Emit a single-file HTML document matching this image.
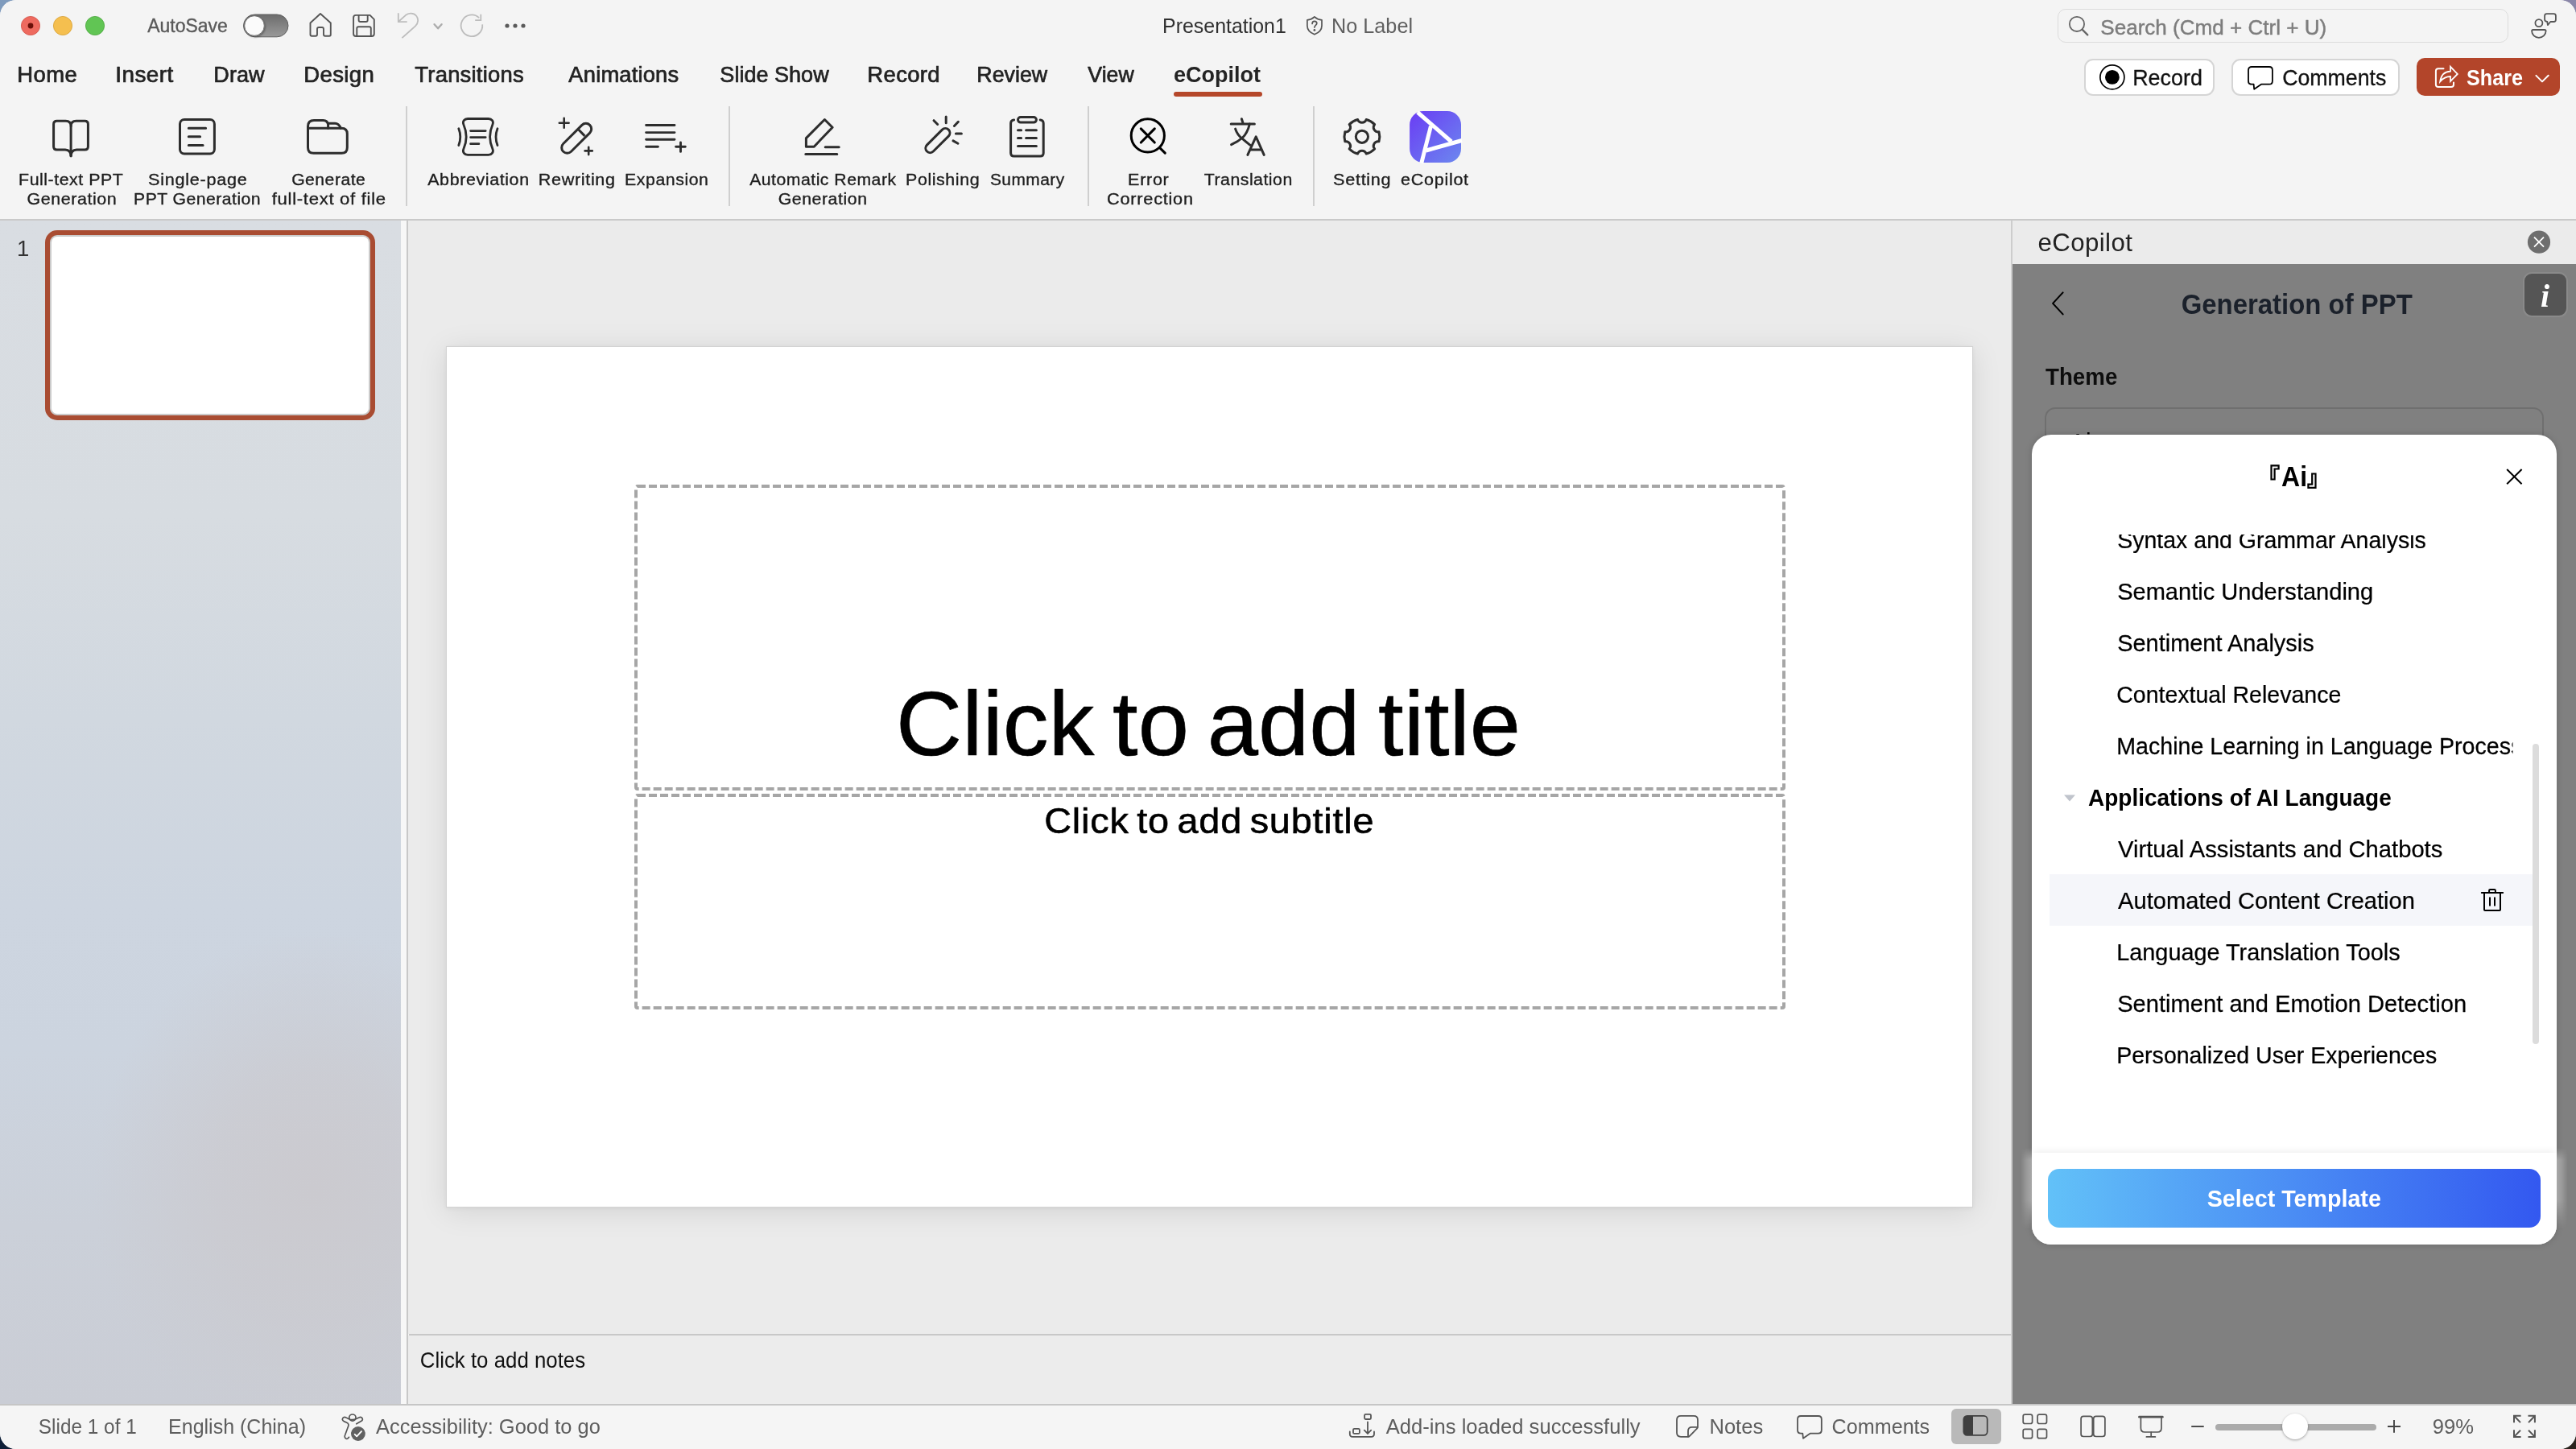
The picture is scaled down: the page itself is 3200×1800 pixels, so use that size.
<!DOCTYPE html>
<html><head><meta charset="utf-8"><title>PowerPoint eCopilot</title>
<style>
html,body{margin:0;padding:0;}
body{width:3200px;height:1800px;position:relative;overflow:hidden;font-family:"Liberation Sans",sans-serif;background:#f4f4f4}
svg text{font-family:"Liberation Sans",sans-serif;white-space:pre}
</style></head><body>
<div style="position:absolute;left:0px;top:0px;width:40px;height:40px;background:#7f9bbd"></div><div style="position:absolute;left:3160px;top:0px;width:40px;height:40px;background:#8a86a8"></div><div style="position:absolute;left:0px;top:1760px;width:40px;height:40px;background:#0e1f38"></div><div style="position:absolute;left:3160px;top:1760px;width:40px;height:40px;background:#2a231d"></div>
<div style="position:absolute;left:0;top:0;width:3200px;height:1800px;border-radius:20px;overflow:hidden;background:#f4f4f4">
<div style="position:absolute;left:0px;top:0px;width:3200px;height:272px;background:#f4f4f4"></div><div style="position:absolute;left:0px;top:272px;width:3200px;height:2px;background:#c9c9c9"></div><div style="position:absolute;left:0px;top:274px;width:498px;height:1470px;background:radial-gradient(ellipse 55% 22% at 78% 82%,rgba(203,202,207,1) 0%,rgba(203,202,207,0.7) 45%,rgba(203,202,207,0) 100%),linear-gradient(180deg,#d9dde2 0%,#d7dce1 25%,#d1d8e0 42%,#cdd5e0 58%,#ccd4df 70%,#cbd0d9 85%,#cacdd5 100%)"></div><div style="position:absolute;left:498px;top:274px;width:7px;height:1470px;background:#f7f7f7"></div><div style="position:absolute;left:505px;top:274px;width:2px;height:1470px;background:#c8c8c8"></div><div style="position:absolute;left:56px;top:286px;width:410px;height:236px;box-sizing:border-box;border:6px solid #a94c32;border-radius:15px;background:#a94c32"></div><div style="position:absolute;left:62px;top:292px;width:398px;height:224px;box-sizing:border-box;border:2px solid #cbcbcb;border-radius:9px;background:#fff"></div><div style="position:absolute;left:507px;top:274px;width:1991px;height:1383px;background:#ebebeb"></div><div style="position:absolute;left:508px;top:1657px;width:1990px;height:2px;background:#c8c8c8"></div><div style="position:absolute;left:507px;top:1659px;width:1991px;height:85px;background:#ececec"></div><div style="position:absolute;left:554px;top:430px;width:1897px;height:1070px;box-sizing:border-box;background:#fff;border:1.6px solid #d3d3d3;box-shadow:0 5px 34px rgba(0,0,0,0.10),0 1px 6px rgba(0,0,0,0.05)"></div><div style="position:absolute;left:2498px;top:274px;width:2px;height:1470px;background:#cdcdcd"></div><div style="position:absolute;left:2500px;top:274px;width:700px;height:54px;background:#ebebeb"></div><div style="position:absolute;left:2500px;top:328px;width:700px;height:1416px;background:#808080"></div><div style="position:absolute;left:0px;top:1744px;width:3200px;height:2px;background:#c6c6c6"></div><div style="position:absolute;left:0px;top:1746px;width:3200px;height:54px;background:#f5f5f5"></div><div style="position:absolute;left:2556px;top:11px;width:560px;height:42px;box-sizing:border-box;border:1.5px solid #dcdcdc;border-radius:10px;background:#f4f4f4"></div><div style="position:absolute;left:2589px;top:73px;width:162px;height:46px;box-sizing:border-box;border:2px solid #d5d5d5;border-radius:11px;background:#fff"></div><div style="position:absolute;left:2772px;top:73px;width:209px;height:46px;box-sizing:border-box;border:2px solid #d5d5d5;border-radius:11px;background:#fff"></div><div style="position:absolute;left:3002px;top:72px;width:178px;height:47px;border-radius:10px;background:#b3452a"></div><div style="position:absolute;left:1458px;top:114px;width:110px;height:6px;border-radius:3px;background:#b5472a"></div><div style="position:absolute;left:504px;top:132px;width:1.5px;height:124px;background:#cfcfcf"></div><div style="position:absolute;left:905px;top:132px;width:1.5px;height:124px;background:#cfcfcf"></div><div style="position:absolute;left:1351px;top:132px;width:1.5px;height:124px;background:#cfcfcf"></div><div style="position:absolute;left:1631px;top:132px;width:1.5px;height:124px;background:#cfcfcf"></div><div style="position:absolute;left:3134px;top:338px;width:56px;height:56px;box-sizing:border-box;border:2px solid #8a8a8a;border-radius:11px;background:#555"></div><div style="position:absolute;left:2540px;top:506px;width:620px;height:120px;box-sizing:border-box;border:2px solid #6f6f6f;border-radius:13px"></div><div style="position:absolute;left:2424px;top:1750px;width:62px;height:44px;border-radius:6px;background:#b9b9b9"></div><div style="position:absolute;left:2752px;top:1769px;width:200px;height:8px;border-radius:4px;background:#ababab"></div><div style="position:absolute;left:2835px;top:1756px;width:32px;height:32px;border-radius:50%;background:#fff;box-shadow:0 1px 3px rgba(0,0,0,0.35)"></div>
<svg width="3200" height="1800" viewBox="0 0 3200 1800" style="position:absolute;left:0;top:0;will-change:transform">
<text x="0" y="0" transform="translate(183.19 40.40) scale(0.9668 1)" style="font-size:23.75px;font-weight:normal;letter-spacing:0.000px;fill:#5a5a5a;stroke:#5a5a5a;stroke-width:0.4px;stroke-linejoin:round" >AutoSave</text><text x="0" y="0" transform="translate(1444.10 41.00) scale(0.9497 1)" style="font-size:26.25px;font-weight:normal;letter-spacing:0.000px;fill:#303030" >Presentation1</text><text x="0" y="0" transform="translate(1654.08 41.00) scale(0.9608 1)" style="font-size:26.25px;font-weight:normal;letter-spacing:0.000px;fill:#5f5f5f" >No Label</text><text x="0" y="0" transform="translate(2609.25 42.70) scale(0.9842 1)" style="font-size:26.5px;font-weight:normal;letter-spacing:0.000px;fill:#7d7d7d;stroke:#7d7d7d;stroke-width:0.45px;stroke-linejoin:round" >Search (Cmd + Ctrl + U)</text><text x="0" y="0" transform="translate(21.32 102.00) scale(1.0165 1)" style="font-size:27.0px;font-weight:normal;letter-spacing:0.377px;fill:#232323;stroke:#232323;stroke-width:0.7px;stroke-linejoin:round" >Home</text><text x="0" y="0" transform="translate(143.30 102.00) scale(1.0327 1)" style="font-size:27.0px;font-weight:normal;letter-spacing:0.416px;fill:#232323;stroke:#232323;stroke-width:0.7px;stroke-linejoin:round" >Insert</text><text x="0" y="0" transform="translate(265.35 102.00) scale(1.0024 1)" style="font-size:27.0px;font-weight:normal;letter-spacing:0.050px;fill:#232323;stroke:#232323;stroke-width:0.7px;stroke-linejoin:round" >Draw</text><text x="0" y="0" transform="translate(377.32 102.00) scale(1.0204 1)" style="font-size:27.0px;font-weight:normal;letter-spacing:0.323px;fill:#232323;stroke:#232323;stroke-width:0.7px;stroke-linejoin:round" >Design</text><text x="0" y="0" transform="translate(515.34 102.00) scale(1.0166 1)" style="font-size:27.0px;font-weight:normal;letter-spacing:0.211px;fill:#232323;stroke:#232323;stroke-width:0.7px;stroke-linejoin:round" >Transitions</text><text x="0" y="0" transform="translate(706.35 102.00) scale(1.0123 1)" style="font-size:27.0px;font-weight:normal;letter-spacing:0.181px;fill:#232323;stroke:#232323;stroke-width:0.7px;stroke-linejoin:round" >Animations</text><text x="0" y="0" transform="translate(894.35 102.00) scale(1.0011 1)" style="font-size:27.0px;font-weight:normal;letter-spacing:0.017px;fill:#232323;stroke:#232323;stroke-width:0.7px;stroke-linejoin:round" >Slide Show</text><text x="0" y="0" transform="translate(1077.32 102.00) scale(1.0197 1)" style="font-size:27.0px;font-weight:normal;letter-spacing:0.324px;fill:#232323;stroke:#232323;stroke-width:0.7px;stroke-linejoin:round" >Record</text><text x="0" y="0" transform="translate(1213.36 102.00) scale(0.9920 1)" style="font-size:27.0px;font-weight:normal;letter-spacing:0.000px;fill:#232323;stroke:#232323;stroke-width:0.7px;stroke-linejoin:round" >Review</text><text x="0" y="0" transform="translate(1351.35 102.00) scale(0.9881 1)" style="font-size:27.0px;font-weight:normal;letter-spacing:0.000px;fill:#232323;stroke:#232323;stroke-width:0.7px;stroke-linejoin:round" >View</text><text x="1458.00" y="102.00" style="font-size:27.0px;font-weight:bold;letter-spacing:0.000px;fill:#232323" >eCopilot</text><text x="0" y="0" transform="translate(2649.16 106.00) scale(0.9964 1)" style="font-size:27.0px;font-weight:normal;letter-spacing:0.000px;fill:#111;stroke:#111;stroke-width:0.3px;stroke-linejoin:round" >Record</text><text x="0" y="0" transform="translate(2835.16 106.00) scale(0.9899 1)" style="font-size:27.0px;font-weight:normal;letter-spacing:0.000px;fill:#111;stroke:#111;stroke-width:0.3px;stroke-linejoin:round" >Comments</text><text x="0" y="0" transform="translate(3064.07 106.00) scale(0.9315 1)" style="font-size:27.0px;font-weight:bold;letter-spacing:0.000px;fill:#fff" >Share</text><text x="0" y="0" transform="translate(23.07 230.00) scale(1.0548 1)" style="font-size:20.25px;font-weight:normal;letter-spacing:0.500px;fill:#1e1e1e;stroke:#1e1e1e;stroke-width:0.35px;stroke-linejoin:round" >Full-text PPT</text><text x="0" y="0" transform="translate(33.43 254.00) scale(1.0562 1)" style="font-size:20.25px;font-weight:normal;letter-spacing:0.581px;fill:#1e1e1e;stroke:#1e1e1e;stroke-width:0.35px;stroke-linejoin:round" >Generation</text><text x="0" y="0" transform="translate(184.12 230.00) scale(1.0689 1)" style="font-size:20.25px;font-weight:normal;letter-spacing:0.685px;fill:#1e1e1e;stroke:#1e1e1e;stroke-width:0.35px;stroke-linejoin:round" >Single-page</text><text x="0" y="0" transform="translate(166.09 254.00) scale(1.0444 1)" style="font-size:20.25px;font-weight:normal;letter-spacing:0.466px;fill:#1e1e1e;stroke:#1e1e1e;stroke-width:0.35px;stroke-linejoin:round" >PPT Generation</text><text x="0" y="0" transform="translate(362.14 230.00) scale(1.0435 1)" style="font-size:20.25px;font-weight:normal;letter-spacing:0.496px;fill:#1e1e1e;stroke:#1e1e1e;stroke-width:0.35px;stroke-linejoin:round" >Generate</text><text x="0" y="0" transform="translate(337.69 254.00) scale(1.0928 1)" style="font-size:20.25px;font-weight:normal;letter-spacing:0.633px;fill:#1e1e1e;stroke:#1e1e1e;stroke-width:0.35px;stroke-linejoin:round" >full-text of file</text><text x="0" y="0" transform="translate(531.19 230.00) scale(1.0595 1)" style="font-size:20.25px;font-weight:normal;letter-spacing:0.568px;fill:#1e1e1e;stroke:#1e1e1e;stroke-width:0.35px;stroke-linejoin:round" >Abbreviation</text><text x="0" y="0" transform="translate(668.75 230.00) scale(1.0661 1)" style="font-size:20.25px;font-weight:normal;letter-spacing:0.630px;fill:#1e1e1e;stroke:#1e1e1e;stroke-width:0.35px;stroke-linejoin:round" >Rewriting</text><text x="0" y="0" transform="translate(776.08 230.00) scale(1.0501 1)" style="font-size:20.25px;font-weight:normal;letter-spacing:0.545px;fill:#1e1e1e;stroke:#1e1e1e;stroke-width:0.35px;stroke-linejoin:round" >Expansion</text><text x="0" y="0" transform="translate(931.18 230.00) scale(1.0461 1)" style="font-size:20.25px;font-weight:normal;letter-spacing:0.489px;fill:#1e1e1e;stroke:#1e1e1e;stroke-width:0.35px;stroke-linejoin:round" >Automatic Remark</text><text x="0" y="0" transform="translate(966.63 254.00) scale(1.0516 1)" style="font-size:20.25px;font-weight:normal;letter-spacing:0.536px;fill:#1e1e1e;stroke:#1e1e1e;stroke-width:0.35px;stroke-linejoin:round" >Generation</text><text x="0" y="0" transform="translate(1125.07 230.00) scale(1.0583 1)" style="font-size:20.25px;font-weight:normal;letter-spacing:0.546px;fill:#1e1e1e;stroke:#1e1e1e;stroke-width:0.35px;stroke-linejoin:round" >Polishing</text><text x="0" y="0" transform="translate(1229.95 230.00) scale(1.0327 1)" style="font-size:20.25px;font-weight:normal;letter-spacing:0.456px;fill:#1e1e1e;stroke:#1e1e1e;stroke-width:0.35px;stroke-linejoin:round" >Summary</text><text x="0" y="0" transform="translate(1401.06 230.00) scale(1.0652 1)" style="font-size:20.25px;font-weight:normal;letter-spacing:0.663px;fill:#1e1e1e;stroke:#1e1e1e;stroke-width:0.35px;stroke-linejoin:round" >Error</text><text x="0" y="0" transform="translate(1375.11 254.00) scale(1.0731 1)" style="font-size:20.25px;font-weight:normal;letter-spacing:0.691px;fill:#1e1e1e;stroke:#1e1e1e;stroke-width:0.35px;stroke-linejoin:round" >Correction</text><text x="0" y="0" transform="translate(1495.78 230.00) scale(1.0511 1)" style="font-size:20.25px;font-weight:normal;letter-spacing:0.478px;fill:#1e1e1e;stroke:#1e1e1e;stroke-width:0.35px;stroke-linejoin:round" >Translation</text><text x="0" y="0" transform="translate(1656.12 230.00) scale(1.0681 1)" style="font-size:20.25px;font-weight:normal;letter-spacing:0.651px;fill:#1e1e1e;stroke:#1e1e1e;stroke-width:0.35px;stroke-linejoin:round" >Setting</text><text x="0" y="0" transform="translate(1740.12 230.00) scale(1.0658 1)" style="font-size:20.25px;font-weight:normal;letter-spacing:0.647px;fill:#1e1e1e;stroke:#1e1e1e;stroke-width:0.35px;stroke-linejoin:round" >eCopilot</text><text x="21.00" y="318.00" style="font-size:27.5px;font-weight:normal;letter-spacing:0.000px;fill:#333" >1</text><text x="0" y="0" transform="translate(1113.01 937.80) scale(0.9982 1)" style="font-size:114px;font-weight:normal;letter-spacing:0.000px;fill:#000;word-spacing:-9px;stroke:#000;stroke-width:0.6px;stroke-linejoin:round" >Click to add title</text><text x="0" y="0" transform="translate(1297.23 1035.00) scale(1.0414 1)" style="font-size:45.0px;font-weight:normal;letter-spacing:0.744px;fill:#000;word-spacing:-4px;stroke:#000;stroke-width:0.6px;stroke-linejoin:round" >Click to add subtitle</text><text x="0" y="0" transform="translate(521.79 1699.40) scale(0.9148 1)" style="font-size:28.25px;font-weight:normal;letter-spacing:0.000px;fill:#111" >Click to add notes</text><text x="0" y="0" transform="translate(47.85 1781.20) scale(0.9465 1)" style="font-size:25.75px;font-weight:normal;letter-spacing:0.000px;fill:#5e5e5e" >Slide 1 of 1</text><text x="0" y="0" transform="translate(209.06 1781.20) scale(0.9711 1)" style="font-size:25.75px;font-weight:normal;letter-spacing:0.000px;fill:#5e5e5e" >English (China)</text><text x="0" y="0" transform="translate(467.00 1781.20) scale(0.9893 1)" style="font-size:25.75px;font-weight:normal;letter-spacing:0.000px;fill:#5e5e5e" >Accessibility: Good to go</text><text x="0" y="0" transform="translate(1721.70 1781.20) scale(0.9947 1)" style="font-size:25.75px;font-weight:normal;letter-spacing:0.000px;fill:#5e5e5e" >Add-ins loaded successfully</text><text x="0" y="0" transform="translate(2123.41 1781.20) scale(0.9938 1)" style="font-size:25.75px;font-weight:normal;letter-spacing:0.000px;fill:#5e5e5e" >Notes</text><text x="0" y="0" transform="translate(2275.62 1781.20) scale(0.9772 1)" style="font-size:25.75px;font-weight:normal;letter-spacing:0.000px;fill:#5e5e5e" >Comments</text><text x="0" y="0" transform="translate(3021.71 1781.20) scale(0.9940 1)" style="font-size:25.75px;font-weight:normal;letter-spacing:0.000px;fill:#5e5e5e" >99%</text><text x="0" y="0" transform="translate(2531.48 311.70) scale(1.0248 1)" style="font-size:30.5px;font-weight:normal;letter-spacing:0.383px;fill:#222" >eCopilot</text><text x="0" y="0" transform="translate(2709.68 390.00) scale(0.9209 1)" style="font-size:35.75px;font-weight:bold;letter-spacing:0.000px;fill:#1b212b" >Generation of PPT</text><text x="0" y="0" transform="translate(2541.00 478.00) scale(0.9316 1)" style="font-size:29.75px;font-weight:bold;letter-spacing:0.000px;fill:#0d0d0d" >Theme</text><text x="2571.00" y="559.00" style="font-size:30.0px;font-weight:normal;letter-spacing:0.000px;fill:#000" >Ai</text>
<circle cx="38" cy="32" r="11.6" fill="#ee6a5f" stroke="#d25247" stroke-width="0.8"/>
<circle cx="38" cy="32" r="3.4" fill="#6b1009"/>
<circle cx="78" cy="32" r="11.6" fill="#f5bf4f" stroke="#d6a036" stroke-width="0.8"/>
<circle cx="118" cy="32" r="11.6" fill="#61c554" stroke="#4aa63c" stroke-width="0.8"/>
<defs><linearGradient id="tg" x1="0" y1="0" x2="0" y2="1"><stop offset="0" stop-color="#6c6c6c"/><stop offset="1" stop-color="#9a9a9a"/></linearGradient><linearGradient id="lg" x1="0" y1="0" x2="1" y2="1"><stop offset="0" stop-color="#6a3cf4"/><stop offset="1" stop-color="#6c88ef"/></linearGradient><filter id="ks" x="-50%" y="-50%" width="200%" height="200%"><feDropShadow dx="1" dy="1.5" stdDeviation="1.2" flood-color="#000" flood-opacity="0.35"/></filter></defs>
<rect x="302.5" y="18" width="55.5" height="27.8" rx="13.9" fill="url(#tg)" stroke="#5c5c5c" stroke-width="1"/>
<circle cx="316" cy="32" r="12.3" fill="#fbfbfb" stroke="#6a6a6a" stroke-width="0.9" filter="url(#ks)"/>
<path d="M385.5 43 L385.5 28.5 L398 17 L410.8 28.5 L410.8 43 Q410.8 44.7 409 44.7 L404 44.7 Q402 44.7 402 42.7 L402 36 Q402 34 400 34 L396 34 Q394 34 394 36 L394 42.7 Q394 44.7 392 44.7 L387.3 44.7 Q385.5 44.7 385.5 43 Z" fill="none" stroke="#555" stroke-width="1.9" stroke-linecap="round" stroke-linejoin="round" />
<path d="M442 18.9 L459.6 18.9 L464.8 24.1 L464.8 42 Q464.8 45 461.8 45 L442.1 45 Q439.1 45 439.1 42 L439.1 21.9 Q439.1 18.9 442 18.9 Z" fill="none" stroke="#555" stroke-width="1.9" stroke-linecap="round" stroke-linejoin="round" />
<path d="M445.6 19 L445.6 25 Q445.6 27 447.6 27 L454.7 27 Q456.7 27 456.7 25 L456.7 19" fill="none" stroke="#555" stroke-width="1.9" stroke-linecap="round" stroke-linejoin="round" />
<path d="M443.3 45 L443.3 35.3 Q443.3 33.3 445.3 33.3 L458.8 33.3 Q460.8 33.3 460.8 35.3 L460.8 45" fill="none" stroke="#555" stroke-width="1.9" stroke-linecap="round" stroke-linejoin="round" />
<path d="M494.8 16.3 L494.8 27.1 L505.7 27.1" fill="none" stroke="#bdbdbd" stroke-width="1.8" stroke-linecap="butt" stroke-linejoin="miter" />
<path d="M494.9 27 L504 18.8 C507.5 15.9 513.5 15.6 517 19.5 C520.3 23.2 519.6 29 516 32.3 L499.4 47.2" fill="none" stroke="#bdbdbd" stroke-width="1.8" stroke-linecap="butt" stroke-linejoin="round" />
<path d="M539.6 30.2 L544.1 35.3 L548.6 30.2" fill="none" stroke="#adadad" stroke-width="2.4" stroke-linecap="round" stroke-linejoin="round" />
<path d="M599.2 30.3 A13.3 13.3 0 1 1 595.1 22.1" fill="none" stroke="#bdbdbd" stroke-width="1.8" stroke-linecap="butt" stroke-linejoin="round" />
<path d="M597.3 17.8 L597.3 25.1 L590.2 25.1" fill="none" stroke="#bdbdbd" stroke-width="1.8" stroke-linecap="butt" stroke-linejoin="miter" />
<circle cx="630" cy="32" r="2.6" fill="#5a5a5a"/>
<circle cx="640" cy="32" r="2.6" fill="#5a5a5a"/>
<circle cx="650" cy="32" r="2.6" fill="#5a5a5a"/>
<path d="M1632.9 20.9 C1630.3 23.4 1627.3 24.6 1623.9 24.9 L1623.9 32 C1623.9 37 1627.5 40.6 1632.9 42.8 C1638.3 40.6 1642 37 1642 32 L1642 24.9 C1638.6 24.6 1635.6 23.4 1632.9 20.9 Z" fill="none" stroke="#555" stroke-width="1.7" stroke-linecap="round" stroke-linejoin="round" />
<path d="M1630.1 29.4 C1630.1 27.5 1631.3 26.4 1632.9 26.4 C1634.6 26.4 1635.8 27.6 1635.8 29.1 C1635.8 31.2 1632.9 31.8 1632.9 34.1" fill="none" stroke="#555" stroke-width="1.7" stroke-linecap="round" stroke-linejoin="round" />
<circle cx="1632.9" cy="37.4" r="1.4" fill="#555"/>
<circle cx="2580" cy="29.9" r="9.1" fill="none" stroke="#666" stroke-width="1.8"/>
<path d="M2586.6 36.6 L2593.3 43.4" fill="none" stroke="#666" stroke-width="2.3" stroke-linecap="round" stroke-linejoin="round" />
<circle cx="3153.9" cy="28.6" r="4.5" fill="none" stroke="#555" stroke-width="1.8"/>
<path d="M3145.1 38.6 Q3145.1 37 3146.7 37 L3161 37 Q3162.6 37 3162.6 38.6 C3162.6 43.2 3158.6 46.8 3153.85 46.8 C3149.1 46.8 3145.1 43.2 3145.1 38.6 Z" fill="none" stroke="#555" stroke-width="1.8" stroke-linecap="round" stroke-linejoin="round" />
<path d="M3163.6 17.1 L3172.4 17.1 Q3174.9 17.1 3174.9 19.6 L3174.9 24.5 Q3174.9 27 3172.4 27 L3168.3 27 L3164.9 31.1 L3164.3 27 Q3161.1 26.7 3161.1 24.2 L3161.1 19.6 Q3161.1 17.1 3163.6 17.1 Z" fill="none" stroke="#555" stroke-width="1.8" stroke-linecap="round" stroke-linejoin="round" />
<circle cx="2623.9" cy="95.9" r="15" fill="none" stroke="#000" stroke-width="1.7"/>
<circle cx="2623.9" cy="95.9" r="8.9" fill="#000"/>
<path d="M2797 83 L2818.9 83 Q2822.9 83 2822.9 87 L2822.9 100.7 Q2822.9 104.7 2818.9 104.7 L2809 104.7 L2800.2 110.8 L2799.6 104.7 L2797 104.7 Q2793 104.7 2793 100.7 L2793 87 Q2793 83 2797 83 Z" fill="none" stroke="#000" stroke-width="1.8" stroke-linecap="round" stroke-linejoin="round" />
<path d="M3035.5 85.3 L3028.9 85.3 Q3025.9 85.3 3025.9 88.3 L3025.9 105 Q3025.9 108 3028.9 108 L3045 108 Q3048 108 3048 105 L3048 102.4" fill="none" stroke="#fff" stroke-width="2" stroke-linecap="round" stroke-linejoin="round" />
<path d="M3031.2 101.3 C3032.3 93.5 3037 89 3044 88.7 L3044 82.8 L3052.8 91.9 L3044 101 L3044 95 C3039.2 95 3035 97 3031.2 101.3 Z" fill="none" stroke="#fff" stroke-width="1.8" stroke-linecap="round" stroke-linejoin="miter" />
<path d="M3150.4 93.9 L3158 101.4 L3165.7 93.7" fill="none" stroke="#fff" stroke-width="2" stroke-linecap="round" stroke-linejoin="round" />
<path d="M88.1 156.5 Q88.1 150.3 81.5 150.3 L70.6 150.3 Q66.6 150.3 66.6 154.3 L66.6 182 Q66.6 186 70.6 186 L81 186 Q88.1 186.3 88.1 193.8 Q88.1 186.3 95.2 186 L105.4 186 Q109.4 186 109.4 182 L109.4 154.3 Q109.4 150.3 105.4 150.3 L94.7 150.3 Q88.1 150.3 88.1 156.5 Z" fill="none" stroke="#2d2d2d" stroke-width="3" stroke-linecap="round" stroke-linejoin="round" />
<path d="M88.1 156.5 L88.1 193.8" fill="none" stroke="#2d2d2d" stroke-width="3" stroke-linecap="round" stroke-linejoin="round" />
<rect x="223.5" y="148.5" width="42.9" height="42.6" rx="5.5" fill="none" stroke="#2d2d2d" stroke-width="3"/>
<path d="M234.3 159.2 L255.6 159.2 M234.3 169.8 L248.6 169.8 M234.3 180.6 L252.1 180.6" fill="none" stroke="#2d2d2d" stroke-width="3" stroke-linecap="round" stroke-linejoin="round" />
<path d="M382.5 159.3 L382.5 183.3 Q382.5 190.3 389.5 190.3 L424.3 190.3 Q431.3 190.3 431.3 183.3 L431.3 166.3 Q431.3 159.3 424.3 159.3 Z" fill="none" stroke="#2d2d2d" stroke-width="3" stroke-linecap="round" stroke-linejoin="round" />
<path d="M382.5 160 L382.5 157 Q382.5 149.5 390 149.5 L401.5 149.5 Q406.5 149.5 407.6 154.5 L407.6 159.3" fill="none" stroke="#2d2d2d" stroke-width="3" stroke-linecap="round" stroke-linejoin="round" />
<path d="M407.6 153.3 L416.2 153.3 Q420.8 153.3 423.3 159.3" fill="none" stroke="#2d2d2d" stroke-width="3" stroke-linecap="round" stroke-linejoin="round" />
<path d="M581 147.5 L606.7 147.5 C611 147.5 613.5 151 612 154.5 C609.8 159.5 608.6 165 608.6 169.9 C608.6 174.8 609.8 180.2 612 185.3 C613.5 188.8 611 192.4 606.7 192.4 L581 192.4 C576.8 192.4 574.3 188.8 575.8 185.3 C578 180.2 579.2 174.8 579.2 169.9 C579.2 165 578 159.5 575.8 154.5 C574.3 151 576.8 147.5 581 147.5 Z" fill="none" stroke="#2d2d2d" stroke-width="2.8" stroke-linecap="round" stroke-linejoin="round" />
<path d="M569.8 159.7 Q573.8 169.9 569.8 180.6 M618 159.7 Q614 169.9 618 180.6" fill="none" stroke="#2d2d2d" stroke-width="2.8" stroke-linecap="round" stroke-linejoin="round" />
<path d="M584.6 162.6 L603.2 162.6 M584.6 170.6 L603.2 170.6 M584.6 178.7 L594.9 178.7" fill="none" stroke="#2d2d2d" stroke-width="2.8" stroke-linecap="round" stroke-linejoin="round" />
<rect x="-23.3" y="-6.9" width="46.6" height="13.8" rx="6.9" transform="translate(716.2 171.8) rotate(-45)" fill="none" stroke="#2d2d2d" stroke-width="3"/>
<path d="M718.7 161 L726.4 168.9" fill="none" stroke="#2d2d2d" stroke-width="3" stroke-linecap="butt" stroke-linejoin="round" />
<path d="M694.8 152.8 L706.6 152.8 M700.7 146.9 L700.7 158.8" fill="none" stroke="#2d2d2d" stroke-width="2.6" stroke-linecap="round" stroke-linejoin="round" />
<path d="M726.6 187.4 L735.8 187.4 M731.2 182.8 L731.2 192.1" fill="none" stroke="#2d2d2d" stroke-width="2.6" stroke-linecap="round" stroke-linejoin="round" />
<path d="M802.6 155.5 L838 155.5 M802.6 164.6 L838 164.6 M802.6 173.3 L838 173.3 M802.6 182.2 L817.4 182.2" fill="none" stroke="#2d2d2d" stroke-width="2.9" stroke-linecap="round" stroke-linejoin="round" />
<path d="M839.6 182.2 L851.3 182.2 M845.5 176.9 L845.5 188.4" fill="none" stroke="#2d2d2d" stroke-width="2.9" stroke-linecap="round" stroke-linejoin="round" />
<path d="M1001.4 182.2 L1001.4 171.6 L1024.4 148.5 L1034.1 158.2 L1011.2 182.2 Z" fill="none" stroke="#2d2d2d" stroke-width="3" stroke-linecap="round" stroke-linejoin="round" />
<path d="M1025.2 182.8 L1042.2 182.8 M1000.8 191.5 L1039.8 191.5" fill="none" stroke="#2d2d2d" stroke-width="3" stroke-linecap="round" stroke-linejoin="round" />
<rect x="-19" y="-5.6" width="38" height="11.2" rx="5.6" transform="translate(1164.9 174.6) rotate(-45)" fill="none" stroke="#2d2d2d" stroke-width="3"/>
<path d="M1175.2 145 L1175.2 152.8 M1160 149.7 L1164.7 154.5 M1190.4 151.3 L1185.4 156.5 M1187.4 166.1 L1194.4 166.1 M1184 174.9 L1190 178.3" fill="none" stroke="#2d2d2d" stroke-width="3" stroke-linecap="round" stroke-linejoin="round" />
<path d="M1259.6 148.9 Q1255.6 149.3 1255.6 153.3 L1255.6 190 Q1255.6 194 1259.6 194 L1292.2 194 Q1296.2 194 1296.2 190 L1296.2 153.3 Q1296.2 149.3 1292.2 148.9" fill="none" stroke="#2d2d2d" stroke-width="3" stroke-linecap="round" stroke-linejoin="round" />
<rect x="1264.5" y="145.5" width="22.9" height="6.6" rx="3.3" fill="none" stroke="#2d2d2d" stroke-width="3"/>
<path d="M1264.5 161.7 L1268.6 161.7 M1274.6 161.7 L1287.4 161.7 M1264.5 171.4 L1268.6 171.4 M1274.6 171.4 L1287.4 171.4 M1264.5 181.4 L1287.4 181.4" fill="none" stroke="#2d2d2d" stroke-width="3" stroke-linecap="round" stroke-linejoin="round" />
<circle cx="1425.8" cy="168.4" r="20.6" fill="none" stroke="#000" stroke-width="3"/>
<path d="M1417.3 159.9 L1434.3 177 M1434.3 159.9 L1417.3 177" fill="none" stroke="#000" stroke-width="3.1" stroke-linecap="round" stroke-linejoin="round" />
<path d="M1441.2 184.2 L1447.3 190.1" fill="none" stroke="#000" stroke-width="3" stroke-linecap="round" stroke-linejoin="round" />
<path d="M1529.2 153.9 L1558.4 153.9 M1542.4 147.7 L1543.9 152.4" fill="none" stroke="#2d2d2d" stroke-width="3" stroke-linecap="round" stroke-linejoin="round" />
<path d="M1552.4 154 C1550.6 161 1548 167 1543.5 171 C1539.5 174.6 1534.5 177.5 1529.6 179.7" fill="none" stroke="#2d2d2d" stroke-width="3" stroke-linecap="round" stroke-linejoin="round" />
<path d="M1534.6 160.1 C1536 164.5 1538.5 169 1543.7 172.6 C1546.5 175 1549.5 177.5 1552.8 180.1" fill="none" stroke="#2d2d2d" stroke-width="3" stroke-linecap="round" stroke-linejoin="round" />
<path d="M1549.9 192.4 L1560.2 169.8 L1570.2 192.4 M1554.2 186 L1566.2 186" fill="none" stroke="#2d2d2d" stroke-width="3" stroke-linecap="round" stroke-linejoin="round" />
<path d="M1712.95 163.76 A21.9 21.9 0 0 1 1712.95 175.84 A5.6 5.6 0 0 0 1707.65 185.01 A21.9 21.9 0 0 1 1697.20 191.05 A5.6 5.6 0 0 0 1686.60 191.05 A21.9 21.9 0 0 1 1676.15 185.01 A5.6 5.6 0 0 0 1670.85 175.84 A21.9 21.9 0 0 1 1670.85 163.76 A5.6 5.6 0 0 0 1676.15 154.59 A21.9 21.9 0 0 1 1686.60 148.55 A5.6 5.6 0 0 0 1697.20 148.55 A21.9 21.9 0 0 1 1707.65 154.59 A5.6 5.6 0 0 0 1712.95 163.76 Z" fill="none" stroke="#2d2d2d" stroke-width="3" stroke-linecap="round" stroke-linejoin="round" />
<circle cx="1691.9" cy="169.8" r="7.6" fill="none" stroke="#2d2d2d" stroke-width="3"/>
<rect x="1751.1" y="137.9" width="63.9" height="64.1" rx="17" fill="url(#lg)"/>
<g stroke="#fff" stroke-width="5" stroke-linecap="butt"><path d="M1761 139.5 L1803 176"/><path d="M1816 174.5 L1771.5 187"/><path d="M1777.5 156.5 L1765.8 202.5"/></g><rect x="790" y="604" width="1426" height="376" rx="2" fill="none" stroke="#a6a6a6" stroke-width="4" stroke-dasharray="10 4"/>
<rect x="790" y="988" width="1426" height="264" rx="2" fill="none" stroke="#a6a6a6" stroke-width="4" stroke-dasharray="10 4"/>
<circle cx="3154" cy="300.7" r="14.1" fill="#6e6e6e"/>
<path d="M3148 294.7 L3160 306.7 M3160 294.7 L3148 306.7" fill="none" stroke="#fff" stroke-width="1.8" stroke-linecap="butt" stroke-linejoin="round" />
<path d="M2562.6 363.4 L2550.1 376.9 L2562.6 390.4" fill="none" stroke="#000" stroke-width="2.1" stroke-linecap="round" stroke-linejoin="round" />
<circle cx="437.9" cy="1761.1" r="4.1" fill="none" stroke="#555" stroke-width="1.7"/>
<path d="M433.5 1785.3 Q431.5 1788.5 429.2 1786.6 Q427.6 1785.3 428.6 1782.8 L432.9 1771 L432.9 1769.6 Q432.7 1768 430.8 1767.2 L427.2 1765.6 Q424.4 1764 425.9 1761.6 Q427.4 1759.6 430 1761 L433.5 1762.7 Q437.9 1764.8 442.4 1762.6 L445.9 1760.9 Q448.6 1759.6 450 1761.8 Q451.2 1764.2 448.4 1765.6 L442.8 1768.8" fill="none" stroke="#555" stroke-width="1.7" stroke-linecap="round" stroke-linejoin="round" />
<circle cx="444.9" cy="1781" r="8.9" fill="#616161"/>
<path d="M440.8 1781.8 L443.2 1784.3 L449 1778.1" fill="none" stroke="#fff" stroke-width="1.9" stroke-linecap="round" stroke-linejoin="round" />
<rect x="1695.1" y="1756.8" width="7.9" height="6.2" rx="1.4" fill="none" stroke="#555" stroke-width="1.8"/>
<rect x="1681" y="1774.8" width="7.9" height="6" rx="1.4" fill="none" stroke="#555" stroke-width="1.8"/>
<path d="M1699 1766.4 L1699 1781 M1694.8 1776.6 L1699 1780.9 L1703.2 1776.6" fill="none" stroke="#555" stroke-width="1.8" stroke-linecap="round" stroke-linejoin="round" />
<path d="M1676.8 1778.4 L1676.8 1781.3 Q1676.8 1784.8 1680.3 1784.8 L1703.5 1784.8 Q1707 1784.8 1707 1781.3 L1707 1778.4" fill="none" stroke="#555" stroke-width="1.8" stroke-linecap="round" stroke-linejoin="round" />
<path d="M2097.5 1784.8 L2088 1784.8 Q2083 1784.8 2083 1779.8 L2083 1763.9 Q2083 1758.9 2088 1758.9 L2104 1758.9 Q2109 1758.9 2109 1763.9 L2109 1772.3 Q2109 1773.7 2108 1774.7 L2099.2 1783.6 Q2098.4 1784.8 2097.5 1784.8 Z" fill="none" stroke="#555" stroke-width="1.8" stroke-linecap="round" stroke-linejoin="round" />
<path d="M2108.6 1772.9 L2101.8 1772.9 Q2097 1772.9 2097 1777.8 L2097 1784.6" fill="none" stroke="#555" stroke-width="1.8" stroke-linecap="round" stroke-linejoin="round" />
<path d="M2237 1759 L2258.8 1759 Q2262.8 1759 2262.8 1763 L2262.8 1776.6 Q2262.8 1780.6 2258.8 1780.6 L2248.9 1780.6 L2240 1786.8 L2239.3 1780.6 L2237 1780.6 Q2233 1780.6 2233 1776.6 L2233 1763 Q2233 1759 2237 1759 Z" fill="none" stroke="#555" stroke-width="1.8" stroke-linecap="round" stroke-linejoin="round" />
<path d="M2443.5 1758.9 L2451 1758.9 L2451 1782.8 L2443.5 1782.8 Q2439.3 1782.8 2439.3 1778.6 L2439.3 1763.1 Q2439.3 1758.9 2443.5 1758.9 Z" fill="#3f3f3f" stroke="none" stroke-width="0" stroke-linecap="round" stroke-linejoin="round" />
<rect x="2439.3" y="1758.9" width="29.4" height="23.9" rx="4.3" fill="none" stroke="#3f3f3f" stroke-width="1.7"/>
<rect x="2513.2" y="1757.1" width="11.4" height="11.4" rx="2.3" fill="none" stroke="#555" stroke-width="1.7"/>
<rect x="2531.1" y="1757.1" width="11.4" height="11.4" rx="2.3" fill="none" stroke="#555" stroke-width="1.7"/>
<rect x="2513.2" y="1775.3" width="11.4" height="11.4" rx="2.3" fill="none" stroke="#555" stroke-width="1.7"/>
<rect x="2531.1" y="1775.3" width="11.4" height="11.4" rx="2.3" fill="none" stroke="#555" stroke-width="1.7"/>
<rect x="2585.1" y="1759.3" width="14.2" height="25.2" rx="3" fill="none" stroke="#555" stroke-width="1.7"/>
<rect x="2600.7" y="1759.3" width="14.2" height="25.2" rx="3" fill="none" stroke="#555" stroke-width="1.7"/>
<path d="M2657.5 1760.2 L2686.3 1760.2" fill="none" stroke="#555" stroke-width="2.8" stroke-linecap="round" stroke-linejoin="round" />
<path d="M2659.4 1761 L2659.4 1774 Q2659.4 1779 2664.4 1779 L2680 1779 Q2685 1779 2685 1774 L2685 1761" fill="none" stroke="#555" stroke-width="1.7" stroke-linecap="round" stroke-linejoin="round" />
<path d="M2672.2 1779 L2672.2 1784.8 M2666.4 1784.9 L2677.4 1784.9" fill="none" stroke="#555" stroke-width="1.7" stroke-linecap="round" stroke-linejoin="round" />
<path d="M2722.2 1772 L2737.7 1772" fill="none" stroke="#444" stroke-width="1.9" stroke-linecap="butt" stroke-linejoin="round" />
<path d="M2966 1772 L2982 1772 M2974 1764 L2974 1779.8" fill="none" stroke="#444" stroke-width="1.9" stroke-linecap="butt" stroke-linejoin="round" />
<path d="M3131.6 1758.7 L3123 1758.7 L3123 1767.3 M3123 1758.7 L3131 1767.1" fill="none" stroke="#555" stroke-width="2" stroke-linecap="butt" stroke-linejoin="miter" />
<path d="M3140.5 1758.7 L3148.9 1758.7 L3148.9 1767.3 M3148.9 1758.7 L3141 1767.1" fill="none" stroke="#555" stroke-width="2" stroke-linecap="butt" stroke-linejoin="miter" />
<path d="M3123 1776.3 L3123 1784.9 L3131.6 1784.9 M3123 1784.9 L3131 1776.7" fill="none" stroke="#555" stroke-width="2" stroke-linecap="butt" stroke-linejoin="miter" />
<path d="M3148.9 1776.3 L3148.9 1784.9 L3140.5 1784.9 M3148.9 1784.9 L3141 1776.7" fill="none" stroke="#555" stroke-width="2" stroke-linecap="butt" stroke-linejoin="miter" />
<text x="3156" y="380.5" style="font-family:'Liberation Serif',serif;font-size:40px;font-weight:bold;font-style:italic;fill:#fff">i</text>
</svg>
<div style="position:absolute;left:2524px;top:540px;width:652px;height:1006px;border-radius:24px;background:#fff;box-shadow:0 0 8px rgba(0,0,0,0.18)"></div><div style="position:absolute;left:2546px;top:1086px;width:600px;height:64px;background:#f5f6fa"></div><div style="position:absolute;left:2510px;top:1426px;width:14px;height:100px;background:linear-gradient(90deg,rgba(255,255,255,0),rgba(255,255,255,0.38));-webkit-mask-image:linear-gradient(180deg,transparent,#000 15%,#000 65%,transparent)"></div><div style="position:absolute;left:3176px;top:1426px;width:14px;height:100px;background:linear-gradient(270deg,rgba(255,255,255,0),rgba(255,255,255,0.38));-webkit-mask-image:linear-gradient(180deg,transparent,#000 15%,#000 65%,transparent)"></div><div style="position:absolute;left:2524px;top:1432px;width:652px;height:114px;border-radius:0 0 24px 24px;background:#fff;box-shadow:0 -5px 8px -3px rgba(0,0,0,0.07)"></div><div style="position:absolute;left:2544px;top:1452px;width:612px;height:73px;border-radius:14px;background:linear-gradient(90deg,#62c1f8,#3358f0)"></div><div style="position:absolute;left:3146px;top:924px;width:8px;height:373px;border-radius:4px;background:#dcdcdc"></div>
<svg width="3200" height="1800" viewBox="0 0 3200 1800" style="position:absolute;left:0;top:0;will-change:transform">
<defs><clipPath id="lc"><rect x="2524" y="664" width="597.5" height="768"/></clipPath></defs>
<g clip-path="url(#lc)">
<text x="0" y="0" transform="translate(2630.17 681.00) scale(0.9511 1)" style="font-size:30.0px;font-weight:normal;letter-spacing:0.000px;fill:#000;stroke:#000;stroke-width:0.25px;stroke-linejoin:round" >Syntax and Grammar Analysis</text><text x="0" y="0" transform="translate(2630.15 745.00) scale(0.9686 1)" style="font-size:30.0px;font-weight:normal;letter-spacing:0.000px;fill:#000;stroke:#000;stroke-width:0.25px;stroke-linejoin:round" >Semantic Understanding</text><text x="0" y="0" transform="translate(2630.16 809.00) scale(0.9653 1)" style="font-size:30.0px;font-weight:normal;letter-spacing:0.000px;fill:#000;stroke:#000;stroke-width:0.25px;stroke-linejoin:round" >Sentiment Analysis</text><text x="0" y="0" transform="translate(2629.22 873.00) scale(0.9509 1)" style="font-size:30.0px;font-weight:normal;letter-spacing:0.000px;fill:#000;stroke:#000;stroke-width:0.25px;stroke-linejoin:round" >Contextual Relevance</text><text x="0" y="0" transform="translate(2629.21 937.00) scale(0.9541 1)" style="font-size:30.0px;font-weight:normal;letter-spacing:0.000px;fill:#000;stroke:#000;stroke-width:0.25px;stroke-linejoin:round" >Machine Learning in Language Processing</text><text x="0" y="0" transform="translate(2594.07 1001.00) scale(0.9328 1)" style="font-size:30.0px;font-weight:bold;letter-spacing:0.000px;fill:#000" >Applications of AI Language</text><text x="0" y="0" transform="translate(2631.12 1065.00) scale(0.9728 1)" style="font-size:30.0px;font-weight:normal;letter-spacing:0.000px;fill:#000;stroke:#000;stroke-width:0.25px;stroke-linejoin:round" >Virtual Assistants and Chatbots</text><text x="0" y="0" transform="translate(2631.12 1129.00) scale(0.9703 1)" style="font-size:30.0px;font-weight:normal;letter-spacing:0.000px;fill:#000;stroke:#000;stroke-width:0.25px;stroke-linejoin:round" >Automated Content Creation</text><text x="0" y="0" transform="translate(2629.20 1193.00) scale(0.9623 1)" style="font-size:30.0px;font-weight:normal;letter-spacing:0.000px;fill:#000;stroke:#000;stroke-width:0.25px;stroke-linejoin:round" >Language Translation Tools</text><text x="0" y="0" transform="translate(2630.15 1257.00) scale(0.9713 1)" style="font-size:30.0px;font-weight:normal;letter-spacing:0.000px;fill:#000;stroke:#000;stroke-width:0.25px;stroke-linejoin:round" >Sentiment and Emotion Detection</text><text x="0" y="0" transform="translate(2629.22 1321.00) scale(0.9514 1)" style="font-size:30.0px;font-weight:normal;letter-spacing:0.000px;fill:#000;stroke:#000;stroke-width:0.25px;stroke-linejoin:round" >Personalized User Experiences</text>
</g>
<text x="0" y="0" transform="translate(2834.09 603.60) scale(0.9062 1)" style="font-size:35.25px;font-weight:bold;letter-spacing:0.000px;fill:#000" >Ai</text>
<text x="0" y="0" transform="translate(2741.72 1498.90) scale(0.9804 1)" style="font-size:29.25px;font-weight:bold;letter-spacing:0.000px;fill:#fff" >Select Template</text>
<path d="M3114.2 583 L3132.6 601.2 M3132.6 583 L3114.2 601.2" fill="none" stroke="#000" stroke-width="2" stroke-linecap="butt" stroke-linejoin="round" />
<path d="M2821.5 578.3 L2830.6 578.3 L2830.6 582.5 L2825.6 582.5 L2825.6 595.5 L2821.5 595.5 Z" fill="none" stroke="#000" stroke-width="2.2" stroke-linecap="round" stroke-linejoin="miter" />
<path d="M2872.2 588.5 L2876.5 588.5 L2876.5 605.8 L2867.4 605.8 L2867.4 601.6 L2872.2 601.6 Z" fill="none" stroke="#000" stroke-width="2.2" stroke-linecap="round" stroke-linejoin="miter" />
<path d="M2564 987.6 L2578 987.6 L2571 995.6 Z" fill="#c0c4cc"/>
<path d="M3082.8 1109 L3109.2 1109" fill="none" stroke="#000" stroke-width="2" stroke-linecap="round" stroke-linejoin="round" />
<path d="M3092.1 1109 L3092.1 1106.2 Q3092.1 1104.9 3093.4 1104.9 L3098.6 1104.9 Q3099.9 1104.9 3099.9 1106.2 L3099.9 1109" fill="none" stroke="#000" stroke-width="2" stroke-linecap="round" stroke-linejoin="round" />
<path d="M3086 1109 L3086 1130 Q3086 1131 3087 1131 L3105 1131 Q3106 1131 3106 1130 L3106 1109" fill="none" stroke="#000" stroke-width="2" stroke-linecap="round" stroke-linejoin="round" />
<path d="M3093 1115.2 L3093 1124.8 M3099 1115.2 L3099 1124.8" fill="none" stroke="#000" stroke-width="2" stroke-linecap="round" stroke-linejoin="round" />
</svg>
</div>
</body></html>
